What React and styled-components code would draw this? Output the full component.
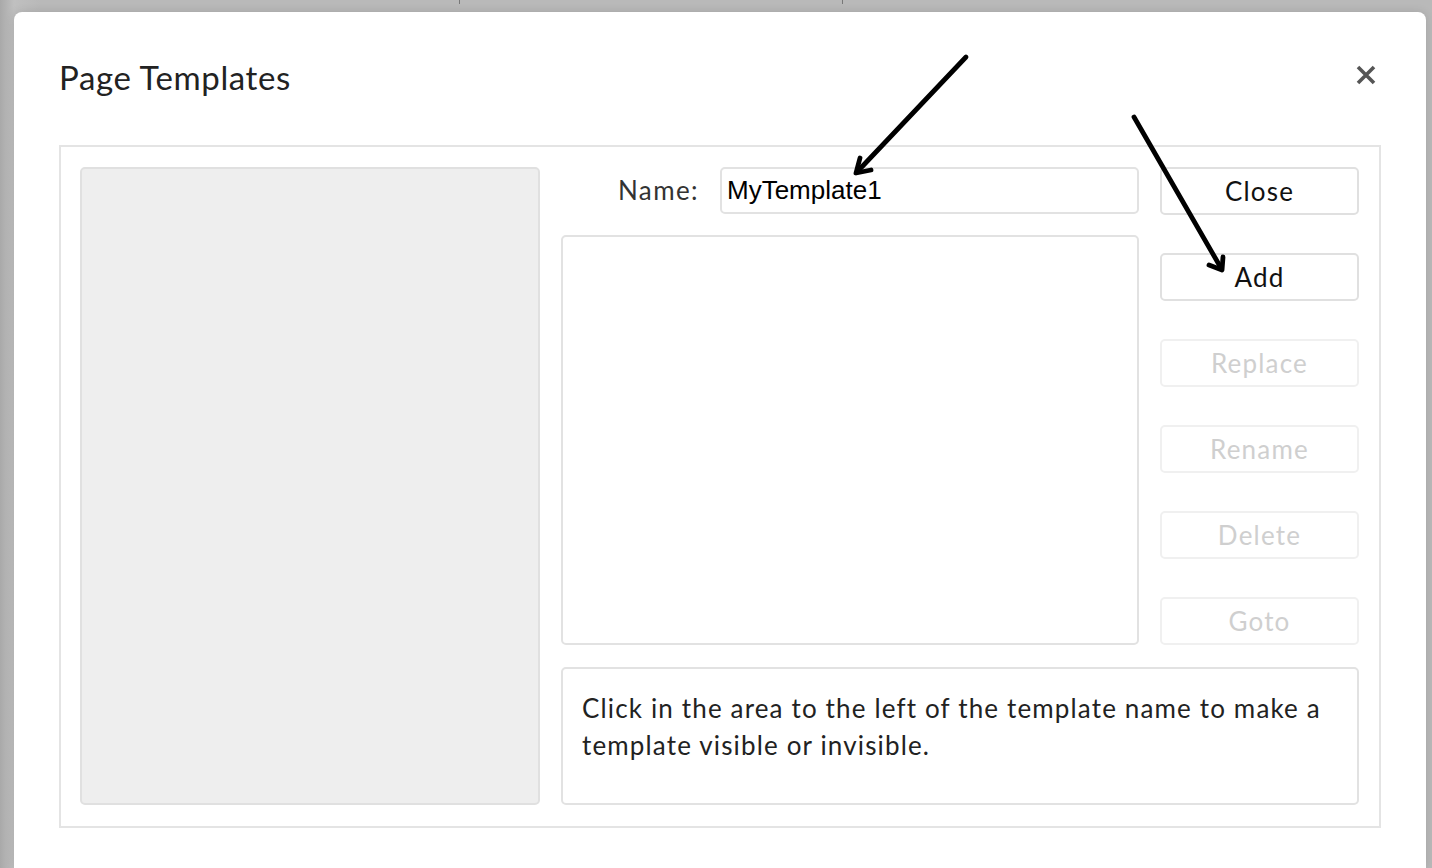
import styled, { createGlobalStyle } from "styled-components";

const GlobalStyle = createGlobalStyle`
  html, body {
    margin: 0;
    height: 100%;
    overflow: hidden;
  }
  body {
    background: linear-gradient(90deg, #a9a9a9 0px, #c0c0c0 14px, #b9b9b9 40px);
    font-family: Lato, "Noto Sans", sans-serif;
  }
`;

const Backdrop = styled.div`
  position: relative;
  min-height: 100vh;
  padding: 12px 6px 0 14px;
  box-sizing: border-box;
`;

const Tick = styled.span`
  position: absolute;
  top: 0;
  left: ${(p) => p.$x}px;
  width: 1px;
  height: 4px;
  background: #777;
`;

const Modal = styled.div`
  background: #fff;
  border-radius: 8px 8px 0 0;
  min-height: calc(100vh - 12px);
  box-shadow: 0 0 10px rgba(0, 0, 0, 0.12);
  overflow: hidden;
`;

const Header = styled.div`
  display: flex;
  justify-content: space-between;
  align-items: flex-start;
  padding: 46px 50px 0 45px;
`;

const Title = styled.h1`
  margin: 0;
  font-size: 33px;
  font-weight: 400;
  letter-spacing: 0.6px;
  line-height: 1.2;
  color: #222;
`;

const CloseIcon = styled.button`
  margin-top: 7px;
  padding: 0;
  border: 0;
  background: none;
  width: 20px;
  height: 20px;
  display: flex;
  cursor: pointer;
`;

const Panel = styled.div`
  margin: 47px 45px 0;
  border: 2px solid #e4e4e4;
  padding: 20px 20px 21px 19px;
  display: grid;
  grid-template-columns: 460px 1fr;
  gap: 21px;
`;

const Preview = styled.div`
  background: #eeeeee;
  border: 2px solid #e0e0e0;
  border-radius: 5px;
  box-sizing: border-box;
  height: 638px;
`;

const RightArea = styled.div`
  display: flex;
  flex-direction: column;
  gap: 22px;
`;

const TopRow = styled.div`
  display: flex;
  gap: 21px;
`;

const MainCol = styled.div`
  flex: 1;
  display: flex;
  flex-direction: column;
  gap: 21px;
`;

const NameRow = styled.div`
  display: flex;
  align-items: center;
  gap: 21px;
  height: 47px;
`;

const Label = styled.label`
  width: 138px;
  text-align: right;
  font-size: 26px;
  letter-spacing: 1.4px;
  color: #333;
`;

const NameInput = styled.input`
  flex: 1;
  height: 47px;
  box-sizing: border-box;
  border: 2px solid #e2e2e2;
  border-radius: 5px;
  padding: 0 5px;
  font-family: "Liberation Sans", Arial, sans-serif;
  font-size: 26px;
  color: #000;
  outline: none;
`;

const ListBox = styled.div`
  height: 410px;
  box-sizing: border-box;
  border: 2px solid #e2e2e2;
  border-radius: 5px;
`;

const ButtonCol = styled.div`
  width: 199px;
  display: flex;
  flex-direction: column;
  gap: 38px;
`;

const ActionButton = styled.button`
  height: 48px;
  box-sizing: border-box;
  border: 2px solid ${(p) => (p.disabled ? "#f0f0f0" : "#e0e0e0")};
  border-radius: 5px;
  background: #fff;
  font-family: Lato, "Noto Sans", sans-serif;
  font-size: 26px;
  letter-spacing: 1.2px;
  color: ${(p) => (p.disabled ? "#cfcfcf" : "#111")};
  padding: 0;
`;

const HelpBox = styled.div`
  height: 138px;
  box-sizing: border-box;
  border: 2px solid #e2e2e2;
  border-radius: 5px;
  padding: 21px 20px 0 19px;
  font-size: 26px;
  letter-spacing: 1.15px;
  line-height: 37px;
  color: #222;
`;

const Arrows = styled.svg`
  position: absolute;
  inset: 0;
  width: 100%;
  height: 100%;
  pointer-events: none;
`;

const buttons = [
  { label: "Close" },
  { label: "Add" },
  { label: "Replace", disabled: true },
  { label: "Rename", disabled: true },
  { label: "Delete", disabled: true },
  { label: "Goto", disabled: true },
];

export default function App() {
  return (
    <>
      <GlobalStyle />
      <Backdrop>
        <Tick $x={459} />
        <Tick $x={842} />
        <Modal>
          <Header>
            <Title>Page Templates</Title>
            <CloseIcon aria-label="Close">
              <svg width="20" height="20" viewBox="0 0 20 20">
                <path d="M2 2L18 18M18 2L2 18" stroke="#555" strokeWidth="3.6" />
              </svg>
            </CloseIcon>
          </Header>
          <Panel>
            <Preview />
            <RightArea>
              <TopRow>
                <MainCol>
                  <NameRow>
                    <Label>Name:</Label>
                    <NameInput defaultValue="MyTemplate1" />
                  </NameRow>
                  <ListBox />
                </MainCol>
                <ButtonCol>
                  {buttons.map((b) => (
                    <ActionButton key={b.label} disabled={b.disabled}>
                      {b.label}
                    </ActionButton>
                  ))}
                </ButtonCol>
              </TopRow>
              <HelpBox>
                Click in the area to the left of the template name to make a
                template visible or invisible.
              </HelpBox>
            </RightArea>
          </Panel>
        </Modal>
        <Arrows viewBox="0 0 1432 868">
          <g stroke="#000" strokeWidth="4.8" fill="none" strokeLinecap="round" strokeLinejoin="round">
            <path d="M966 57L857 172" />
            <path d="M860 158L856 173L871 170" />
            <path d="M1134 117L1221 268" />
            <path d="M1209 265L1222 270L1223 257" />
          </g>
        </Arrows>
      </Backdrop>
    </>
  );
}
